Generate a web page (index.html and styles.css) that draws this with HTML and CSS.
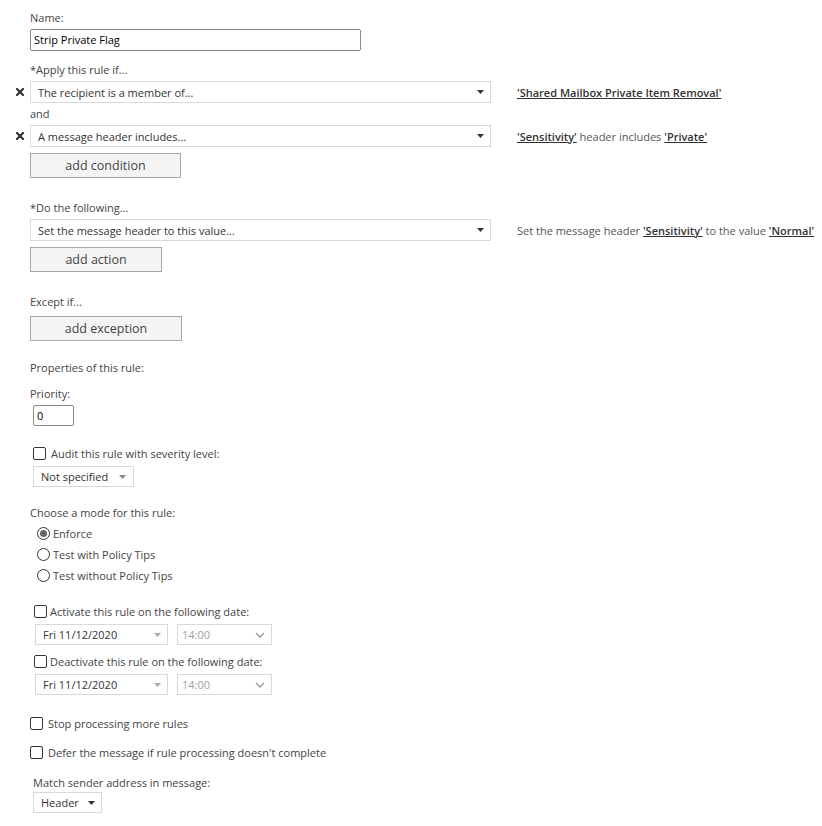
FILE: index.html
```html
<!DOCTYPE html>
<html>
<head>
<meta charset="utf-8">
<link rel="stylesheet" href="styles.css">
</head>
<body>
<div class="form">
  <div class="label first">Name:</div>
  <div class="textbox name-box">Strip Private Flag</div>

  <div class="label sec">*Apply this rule if...</div>
  <div class="cond-row">
    <span class="remove"><svg width="8" height="8" viewBox="0 0 8 8"><path d="M1 1L7 7M7 1L1 7" stroke="#333" stroke-width="2.2" stroke-linecap="square"/></svg></span>
    <div class="select wide"><span>The recipient is a member of...</span><svg class="tri" width="7" height="4" viewBox="0 0 7 4"><path d="M0 0H7L3.5 4Z" fill="#333"/></svg></div>
    <div class="desc"><a href="#">'Shared Mailbox Private Item Removal'</a></div>
  </div>
  <div class="label and">and</div>
  <div class="cond-row">
    <span class="remove"><svg width="8" height="8" viewBox="0 0 8 8"><path d="M1 1L7 7M7 1L1 7" stroke="#333" stroke-width="2.2" stroke-linecap="square"/></svg></span>
    <div class="select wide"><span>A message header includes...</span><svg class="tri" width="7" height="4" viewBox="0 0 7 4"><path d="M0 0H7L3.5 4Z" fill="#333"/></svg></div>
    <div class="desc"><a href="#">'Sensitivity'</a> header includes <a href="#">'Private'</a></div>
  </div>
  <div class="button btn-cond">add condition</div>

  <div class="label sec2">*Do the following...</div>
  <div class="cond-row">
    <span class="remove"></span>
    <div class="select wide"><span>Set the message header to this value...</span><svg class="tri" width="7" height="4" viewBox="0 0 7 4"><path d="M0 0H7L3.5 4Z" fill="#333"/></svg></div>
    <div class="desc">Set the message header <a href="#">'Sensitivity'</a> to the value <a href="#">'Normal'</a></div>
  </div>
  <div class="button btn-action">add action</div>

  <div class="label sec2">Except if...</div>
  <div class="button btn-exc">add exception</div>

  <div class="label props">Properties of this rule:</div>
  <div class="label prio">Priority:</div>
  <div class="textbox prio-box">0</div>

  <div class="check-row audit"><span class="checkbox"></span><span>Audit this rule with severity level:</span></div>
  <div class="select light sev"><span>Not specified</span><svg class="tri" width="7" height="4" viewBox="0 0 7 4"><path d="M0 0H7L3.5 4Z" fill="#888"/></svg></div>

  <div class="label mode">Choose a mode for this rule:</div>
  <div class="radios">
    <div class="radio-row"><span class="radio on"></span><span>Enforce</span></div>
    <div class="radio-row"><span class="radio"></span><span>Test with Policy Tips</span></div>
    <div class="radio-row"><span class="radio"></span><span>Test without Policy Tips</span></div>
  </div>

  <div class="date-group">
    <div class="check-row tight"><span class="checkbox"></span><span>Activate this rule on the following date:</span></div>
    <div class="date-row">
      <div class="select light date"><span>Fri 11/12/2020</span><svg class="tri" width="7" height="4" viewBox="0 0 7 4"><path d="M0 0H7L3.5 4Z" fill="#aaa"/></svg></div>
      <div class="select light time"><span>14:00</span><svg class="chev" width="10" height="6" viewBox="0 0 10 6"><path d="M1 1L5 5L9 1" fill="none" stroke="#999" stroke-width="1.4"/></svg></div>
    </div>
  </div>
  <div class="date-group second">
    <div class="check-row tight"><span class="checkbox"></span><span>Deactivate this rule on the following date:</span></div>
    <div class="date-row">
      <div class="select light date"><span>Fri 11/12/2020</span><svg class="tri" width="7" height="4" viewBox="0 0 7 4"><path d="M0 0H7L3.5 4Z" fill="#aaa"/></svg></div>
      <div class="select light time"><span>14:00</span><svg class="chev" width="10" height="6" viewBox="0 0 10 6"><path d="M1 1L5 5L9 1" fill="none" stroke="#999" stroke-width="1.4"/></svg></div>
    </div>
  </div>

  <div class="check-row stop"><span class="checkbox"></span><span>Stop processing more rules</span></div>
  <div class="check-row defer"><span class="checkbox"></span><span>Defer the message if rule processing doesn't complete</span></div>

  <div class="label match">Match sender address in message:</div>
  <div class="select light header-sel"><span>Header</span><svg class="tri" width="7" height="4" viewBox="0 0 7 4"><path d="M0 0H7L3.5 4Z" fill="#333"/></svg></div>
</div>
</body>
</html>
```

FILE: styles.css
```css
* { box-sizing: border-box; }
html, body { margin: 0; padding: 0; background: #fff; }
body {
  font-family: "Open Sans", "Noto Sans", "DejaVu Sans", sans-serif;
  font-size: 11px;
  color: #444;
}
.form { padding: 10px 0 0 30px; width: 822px; }
.label { line-height: 16px; height: 16px; }
.label.sec { margin-top: 11px; }
.label.and { margin-top: 3px; }
.label.sec2 { margin-top: 22px; }
.label.props { margin-top: 19px; }
.label.prio { margin-top: 10px; }
.label.mode { margin-top: 18px; }
.label.match { margin-top: 14px; padding-left: 3px; }

.textbox {
  border: 1px solid #8a8a8a;
  border-radius: 2px;
  color: #000;
  padding: 0 3px;
  line-height: 20px;
  height: 22px;
  margin-top: 3px;
}
.name-box { width: 331px; }
.prio-box { width: 41px; height: 21px; line-height: 19px; margin-left: 3px; }

.cond-row {
  display: flex;
  align-items: center;
  margin-left: -30px;
  margin-top: 3px;
  height: 22px;
}
.remove {
  width: 30px;
  display: flex;
  justify-content: flex-start;
  padding-left: 16px;
}
.remove svg { display: block; }
.select {
  display: flex;
  align-items: center;
  justify-content: space-between;
  border: 1px solid #d9d9d9;
  background: #fff;
  color: #333;
  height: 22px;
  padding: 0 6px 0 7px;
}
.select.wide { width: 461px; }
.select .tri { display: block; flex: none; }
.desc {
  margin-left: 26px;
  color: #555;
  white-space: nowrap;
}
.desc a {
  color: #333;
  font-weight: 600;
  text-decoration: underline;
}

.button {
  margin-top: 6px;
  height: 25px;
  line-height: 23px;
  text-align: center;
  background: #f4f4f4;
  border: 1px solid #a6a6a6;
  color: #444;
  font-size: 12.5px;
}
.btn-cond { width: 151px; }
.btn-action { width: 132px; }
.btn-exc { width: 152px; margin-top: 6px; }

.check-row {
  display: flex;
  align-items: center;
  gap: 5px;
  line-height: 16px;
  height: 17px;
}
.checkbox {
  width: 13px;
  height: 13px;
  border: 1px solid #333;
  border-radius: 2px;
  background: #fff;
  flex: none;
}
.check-row.audit { margin-top: 19px; margin-left: 3px; }
.select.sev { width: 101px; height: 21px; margin-left: 3px; margin-top: 4px; padding: 0 7px 0 7px; }

.radios { margin-top: 2px; padding-left: 7px; }
.radio-row {
  display: flex;
  align-items: center;
  gap: 3px;
  height: 21px;
}
.radio {
  width: 13px;
  height: 13px;
  border: 1px solid #333;
  border-radius: 50%;
  background: #fff;
  flex: none;
  display: flex;
  align-items: center;
  justify-content: center;
}
.radio.on::after {
  content: "";
  width: 7px;
  height: 7px;
  border-radius: 50%;
  background: #666;
}

.date-group { margin-top: 17px; padding-left: 4px; }
.date-group.second { margin-top: 8px; }
.check-row.tight { gap: 3px; }
.date-row { display: flex; gap: 9px; margin-top: 4px; margin-left: 1px; }
.select.date { width: 133px; height: 21px; padding: 0 6px 0 7px; }
.select.time { width: 95px; height: 21px; color: #a0a0a0; padding: 0 6px 0 4px; }
.select .chev { display: block; }

.check-row.stop { margin-top: 20px; }
.check-row.defer { margin-top: 12px; }
.select.header-sel { width: 69px; height: 21px; margin-left: 3px; margin-top: 1px; padding: 0 6px 0 7px; }
```
